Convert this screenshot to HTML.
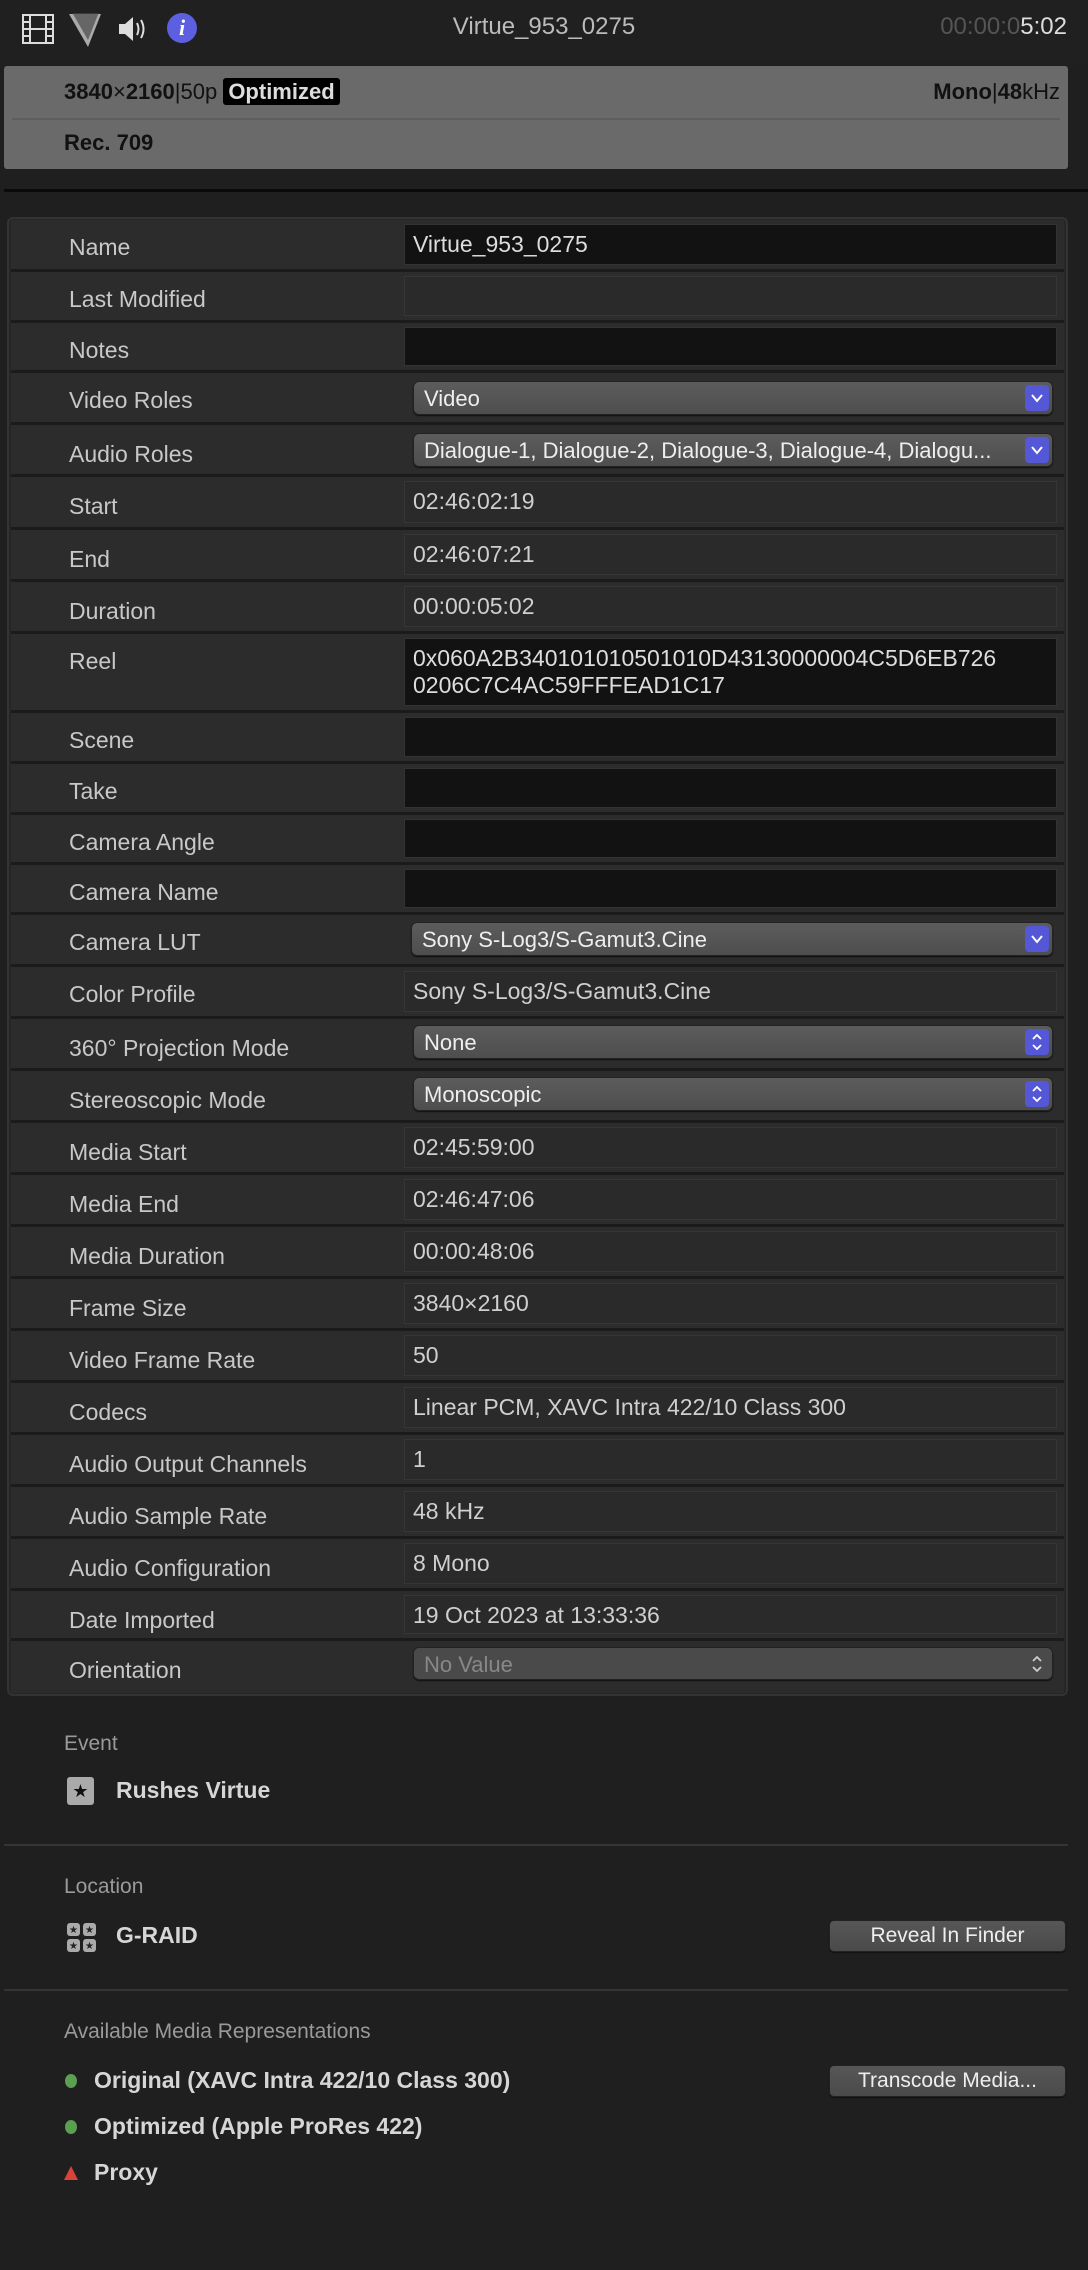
<!DOCTYPE html>
<html><head><meta charset="utf-8"><style>
*{box-sizing:border-box;margin:0;padding:0}
body{width:1088px;height:2270px;background:#1f1f1f;font-family:"Liberation Sans",sans-serif;color:#ccc;position:relative;overflow:hidden}
.abs{position:absolute}
.top{left:0;top:0;width:1088px;height:65px;background:#202020}
.hdr{left:4px;top:66px;width:1064px;height:103px;background:#6a6a6a;border-radius:3px}
.panel{left:7px;top:217px;width:1061px;height:1479px;background:#262626;border:2px solid #333;border-radius:6px}
.row{position:absolute;left:2px;width:1053px;background:#2c2c2c;border-bottom:3px solid #1b1b1b}
.lab{position:absolute;left:58px;font-size:23px;color:#c8c8c8}
.box{position:absolute;left:393px;right:7px;top:4px;bottom:4px;font-size:23px;padding:6px 8px;color:#ddd}
.ed{background:#121212;border:1px solid #333}
.ro{background:#2a2a2a;border:1px solid #363636;color:#cfcfcf}
.dd{position:absolute;left:402px;right:11px;background:linear-gradient(#5c5c5c,#4e4e4e);border:1px solid #222;border-radius:6px;font-size:22px;color:#eee;padding:4px 10px;box-shadow:0 1px 1px #111}
.dd svg{position:absolute;right:3px;top:3px;width:24px;height:26px;background:#5457d6;border-radius:4px}
.sec{font-size:21px;color:#9a9a9a;left:64px}
.big{font-size:23px;color:#d6d6d6;font-weight:bold}
.btn{left:829px;width:237px;height:32px;background:linear-gradient(#575757,#4a4a4a);border:1px solid #222;border-radius:5px;font-size:21px;color:#eee;text-align:center;line-height:30px;box-shadow:0 1px 1px #111}
.hr{left:4px;width:1064px;height:2px;background:#353535}
.dot{width:12px;height:14px;border-radius:50%;background:#5aa050;left:65px}
</style></head><body>
<div class="abs top">
 <svg class="abs" style="left:22px;top:14px" width="32" height="30" viewBox="0 0 32 30"><rect x="1" y="1" width="30" height="28" fill="none" stroke="#ddd" stroke-width="2"/><path d="M8 1v28M24 1v28M1 15h30M1 8h7M1 22h7M24 8h7M24 22h7" stroke="#ddd" stroke-width="2"/></svg>
 <svg class="abs" style="left:68px;top:12px" width="34" height="36" viewBox="0 0 34 36"><path d="M1 2h32L20 35z" fill="#aaa"/><path d="M1 2h32L20 35z" fill="#666" transform="translate(4,0) scale(.8)"/></svg>
 <svg class="abs" style="left:117px;top:14px" width="32" height="30" viewBox="0 0 32 30"><path d="M2 10h6l8-7v24l-8-7H2z" fill="#ddd"/><path d="M20 9q3 6 0 12M24 6q5 9 0 18" stroke="#ddd" stroke-width="2" fill="none"/></svg>
 <div class="abs" style="left:167px;top:13px;width:30px;height:30px;border-radius:50%;background:#5b5fe0;color:#fff;font:italic bold 22px 'Liberation Serif',serif;text-align:center;line-height:30px">i</div>
 <div class="abs" style="left:0;width:1088px;top:13px;text-align:center;font-size:24px;color:#bbb">Virtue_953_0275</div>
 <div class="abs" style="right:21px;top:13px;font-size:24px;color:#555">00:00:0<span style="color:#ddd">5:02</span></div>
</div>
<div class="abs hdr">
 <div class="abs" style="left:60px;top:13px;font-size:22px;color:#111"><b>3840</b>×<b>2160</b>|50p <span style="background:#000;color:#ddd;font-weight:bold;padding:1px 5px;border-radius:3px">Optimized</span></div>
 <div class="abs" style="right:8px;top:13px;font-size:22px;color:#111"><b>Mono</b>|<b>48</b>kHz</div>
 <div class="abs" style="left:8px;right:8px;top:52px;height:2px;background:#5e5e5e"></div>
 <div class="abs" style="left:60px;top:64px;font-size:22px;color:#111;font-weight:bold">Rec. 709</div>
</div>
<div class="abs" style="left:4px;top:189px;width:1084px;height:3px;background:#0a0a0a"></div>
<div class="abs panel">
<div class="row" style="top:1px;height:52px"><div class="lab" style="top:14px">Name</div><div class="box ed">Virtue_953_0275</div></div>
<div class="row" style="top:53px;height:51px"><div class="lab" style="top:14px">Last Modified</div><div class="box ro"></div></div>
<div class="row" style="top:104px;height:50px"><div class="lab" style="top:14px">Notes</div><div class="box ed"></div></div>
<div class="row" style="top:154px;height:52px"><div class="lab" style="top:14px">Video Roles</div><div class="dd" style="top:8px;height:34px">Video<svg viewBox="0 0 24 26"><path d="M7 10l5 6 5-6" stroke="#fff" stroke-width="2" fill="none"/></svg></div></div>
<div class="row" style="top:206px;height:52px"><div class="lab" style="top:16px">Audio Roles</div><div class="dd" style="top:8px;height:34px">Dialogue-1, Dialogue-2, Dialogue-3, Dialogue-4, Dialogu...<svg viewBox="0 0 24 26"><path d="M7 10l5 6 5-6" stroke="#fff" stroke-width="2" fill="none"/></svg></div></div>
<div class="row" style="top:258px;height:53px"><div class="lab" style="top:16px">Start</div><div class="box ro">02:46:02:19</div></div>
<div class="row" style="top:311px;height:52px"><div class="lab" style="top:16px">End</div><div class="box ro">02:46:07:21</div></div>
<div class="row" style="top:363px;height:52px"><div class="lab" style="top:16px">Duration</div><div class="box ro">00:00:05:02</div></div>
<div class="row" style="top:415px;height:79px"><div class="lab" style="top:14px">Reel</div><div class="box ed" style="line-height:27px;padding-top:6px">0x060A2B340101010501010D43130000004C5D6EB726<br>0206C7C4AC59FFFEAD1C17</div></div>
<div class="row" style="top:494px;height:51px"><div class="lab" style="top:14px">Scene</div><div class="box ed"></div></div>
<div class="row" style="top:545px;height:51px"><div class="lab" style="top:14px">Take</div><div class="box ed"></div></div>
<div class="row" style="top:596px;height:50px"><div class="lab" style="top:14px">Camera Angle</div><div class="box ed"></div></div>
<div class="row" style="top:646px;height:50px"><div class="lab" style="top:14px">Camera Name</div><div class="box ed"></div></div>
<div class="row" style="top:696px;height:52px"><div class="lab" style="top:14px">Camera LUT</div><div class="dd" style="top:7px;height:34px;left:400px">Sony S-Log3/S-Gamut3.Cine<svg viewBox="0 0 24 26"><path d="M7 10l5 6 5-6" stroke="#fff" stroke-width="2" fill="none"/></svg></div></div>
<div class="row" style="top:748px;height:52px"><div class="lab" style="top:14px">Color Profile</div><div class="box ro">Sony S-Log3/S-Gamut3.Cine</div></div>
<div class="row" style="top:800px;height:52px"><div class="lab" style="top:16px">360° Projection Mode</div><div class="dd" style="top:6px;height:34px">None<svg viewBox="0 0 24 26"><path d="M8 10l4-4 4 4M8 16l4 4 4-4" stroke="#fff" stroke-width="1.8" fill="none"/></svg></div></div>
<div class="row" style="top:852px;height:52px"><div class="lab" style="top:16px">Stereoscopic Mode</div><div class="dd" style="top:6px;height:34px">Monoscopic<svg viewBox="0 0 24 26"><path d="M8 10l4-4 4 4M8 16l4 4 4-4" stroke="#fff" stroke-width="1.8" fill="none"/></svg></div></div>
<div class="row" style="top:904px;height:52px"><div class="lab" style="top:16px">Media Start</div><div class="box ro">02:45:59:00</div></div>
<div class="row" style="top:956px;height:52px"><div class="lab" style="top:16px">Media End</div><div class="box ro">02:46:47:06</div></div>
<div class="row" style="top:1008px;height:52px"><div class="lab" style="top:16px">Media Duration</div><div class="box ro">00:00:48:06</div></div>
<div class="row" style="top:1060px;height:52px"><div class="lab" style="top:16px">Frame Size</div><div class="box ro">3840×2160</div></div>
<div class="row" style="top:1112px;height:52px"><div class="lab" style="top:16px">Video Frame Rate</div><div class="box ro">50</div></div>
<div class="row" style="top:1164px;height:52px"><div class="lab" style="top:16px">Codecs</div><div class="box ro">Linear PCM, XAVC Intra 422/10 Class 300</div></div>
<div class="row" style="top:1216px;height:52px"><div class="lab" style="top:16px">Audio Output Channels</div><div class="box ro">1</div></div>
<div class="row" style="top:1268px;height:52px"><div class="lab" style="top:16px">Audio Sample Rate</div><div class="box ro">48 kHz</div></div>
<div class="row" style="top:1320px;height:52px"><div class="lab" style="top:16px">Audio Configuration</div><div class="box ro">8 Mono</div></div>
<div class="row" style="top:1372px;height:50px"><div class="lab" style="top:16px">Date Imported</div><div class="box ro">19 Oct 2023 at 13:33:36</div></div>
<div class="row" style="top:1422px;height:52px;border-bottom:none"><div class="lab" style="top:16px">Orientation</div><div class="dd" style="top:6px;height:33px;color:#888;background:#4a4a4a">No Value<svg viewBox="0 0 24 26" style="background:none"><path d="M8 10l4-4 4 4M8 16l4 4 4-4" stroke="#ccc" stroke-width="1.8" fill="none"/></svg></div></div>
</div>
<div class="abs sec" style="top:1732px">Event</div>
<div class="abs" style="left:67px;top:1777px;width:27px;height:28px;background:#aaa;border-radius:3px;color:#111;text-align:center;font-size:18px;line-height:28px">★</div>
<div class="abs big" style="left:116px;top:1777px">Rushes Virtue</div>
<div class="abs hr" style="top:1844px"></div>
<div class="abs sec" style="top:1875px">Location</div>
<svg class="abs" style="left:66px;top:1922px" width="32" height="32" viewBox="0 0 32 32"><rect x="1" y="1" width="13" height="13" rx="3" fill="#aaa"/><rect x="17" y="1" width="13" height="13" rx="3" fill="#aaa"/><rect x="1" y="17" width="13" height="13" rx="3" fill="#aaa"/><rect x="17" y="17" width="13" height="13" rx="3" fill="#aaa"/><g fill="#222" font-size="10" text-anchor="middle"><text x="7.5" y="11">★</text><text x="23.5" y="11">★</text><text x="7.5" y="27">★</text><text x="23.5" y="27">★</text></g></svg>
<div class="abs big" style="left:116px;top:1922px">G-RAID</div>
<div class="abs btn" style="top:1920px">Reveal In Finder</div>
<div class="abs hr" style="top:1989px"></div>
<div class="abs sec" style="top:2020px">Available Media Representations</div>
<div class="abs dot" style="top:2074px"></div>
<div class="abs big" style="left:94px;top:2067px">Original (XAVC Intra 422/10 Class 300)</div>
<div class="abs btn" style="top:2065px">Transcode Media...</div>
<div class="abs dot" style="top:2120px"></div>
<div class="abs big" style="left:94px;top:2113px">Optimized (Apple ProRes 422)</div>
<svg class="abs" style="left:64px;top:2166px" width="14" height="14" viewBox="0 0 14 14"><path d="M7 0L14 14H0z" fill="#d9443a"/></svg>
<div class="abs big" style="left:94px;top:2159px">Proxy</div>
</body></html>
